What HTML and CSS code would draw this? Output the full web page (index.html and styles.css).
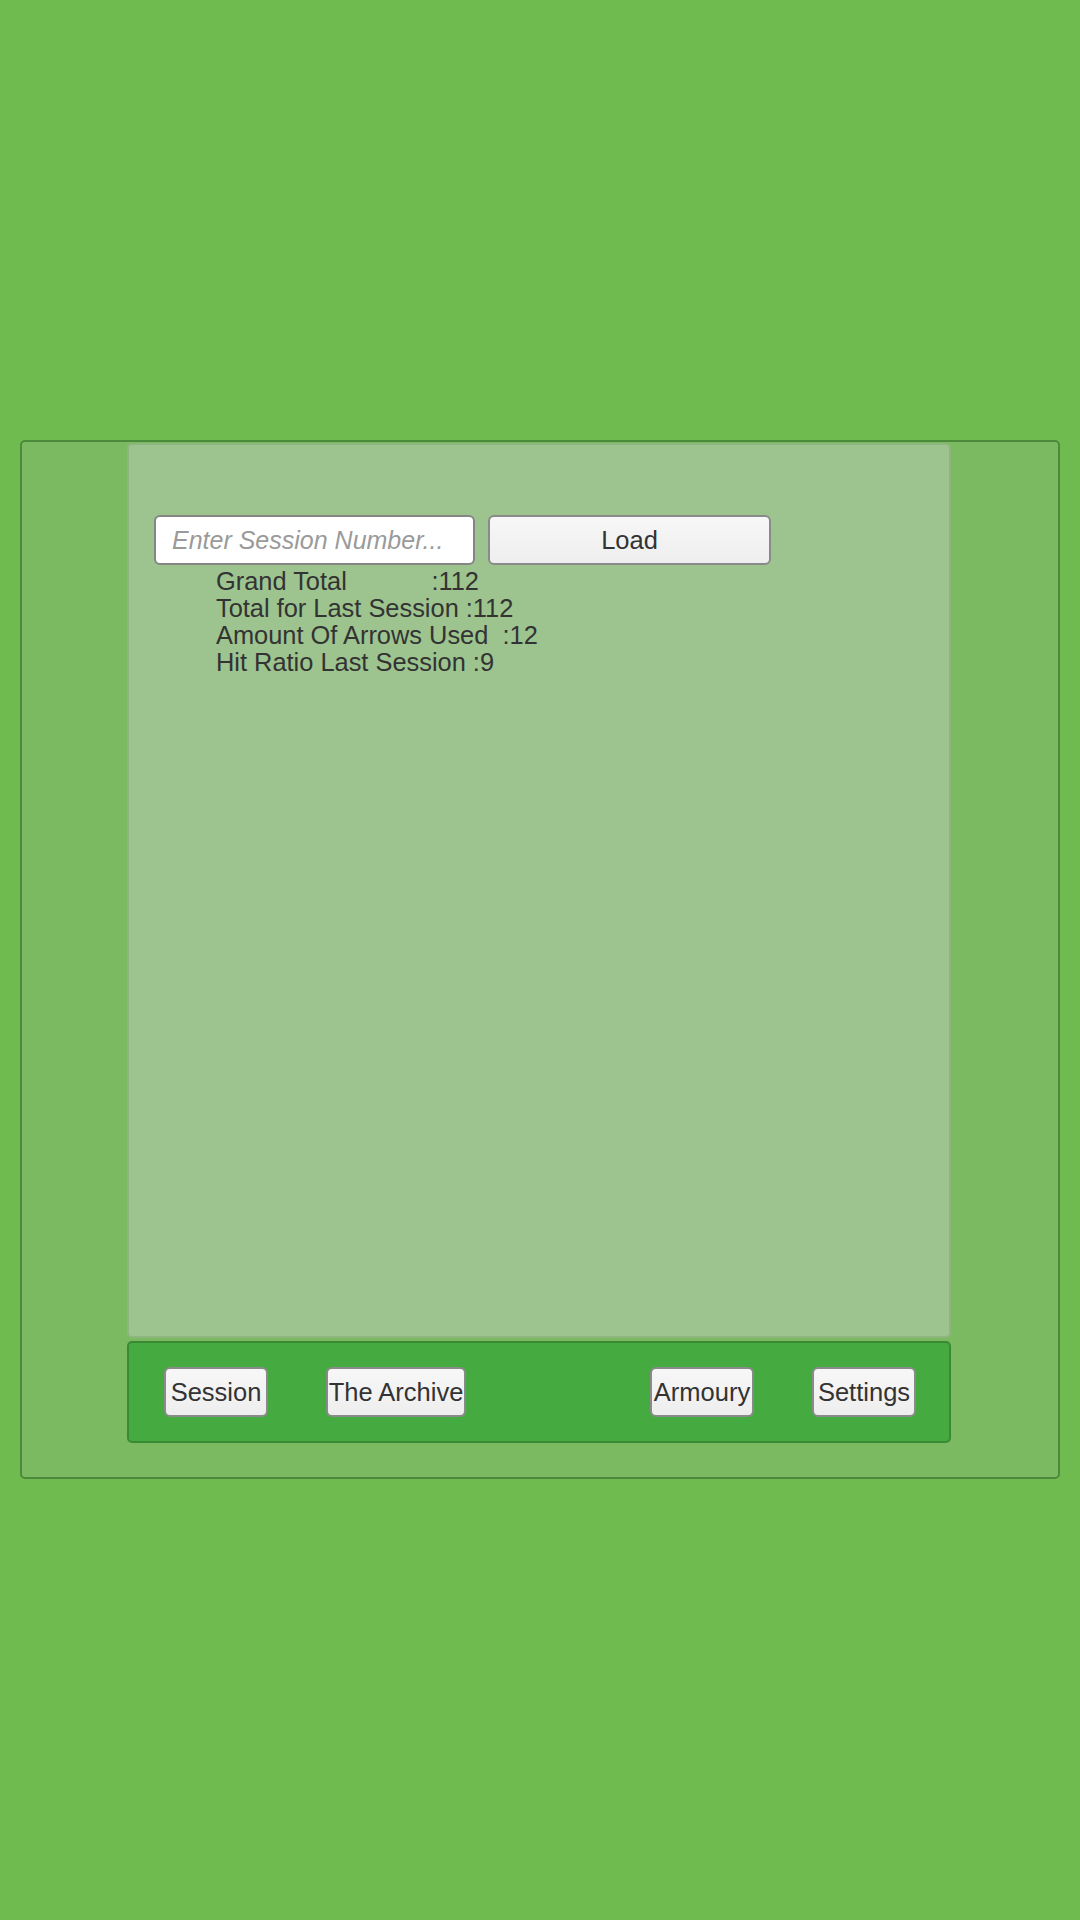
FILE: index.html
```html
<!DOCTYPE html>
<html>
<head>
<meta charset="utf-8">
<link rel="stylesheet" href="styles.css">
</head>
<body>
<div class="screen">
  <div class="frame">
    <div class="panel">
      <div class="load-row">
        <input class="session-input" type="text" placeholder="Enter Session Number...">
        <button class="btn load-btn">Load</button>
      </div>
      <div class="stats">
        <div class="stat">Grand Total            :112</div>
        <div class="stat">Total for Last Session :112</div>
        <div class="stat">Amount Of Arrows Used  :12</div>
        <div class="stat">Hit Ratio Last Session :9</div>
      </div>
    </div>
    <div class="nav">
      <div class="nav-group">
        <button class="btn nav-btn">Session</button>
        <button class="btn nav-btn nav-btn-wide">The Archive</button>
      </div>
      <div class="nav-group">
        <button class="btn nav-btn">Armoury</button>
        <button class="btn nav-btn">Settings</button>
      </div>
    </div>
  </div>
</div>
</body>
</html>
```
FILE: styles.css
```css
html, body {
  margin: 0;
  padding: 0;
}
body {
  background: #6fbb4f;
  font-family: "Liberation Sans", Arial, sans-serif;
  color: #333333;
  width: 1080px;
  height: 1920px;
  overflow: hidden;
}
.screen {
  padding-top: 440px;
  padding-left: 20px;
}
.frame {
  box-sizing: border-box;
  width: 1040px;
  height: 1039px;
  background: #7bba60;
  border: 2px solid #4c8a3b;
  border-radius: 5px;
  padding: 1px 107px 34px 105px;
  display: flex;
  flex-direction: column;
  gap: 3px;
}
.panel {
  box-sizing: border-box;
  height: 895px;
  background: #9dc48f;
  border: 2px solid #8db67f;
  border-radius: 5px;
  padding: 70px 25px 0 25px;
}
.load-row {
  display: flex;
  gap: 13px;
}
.session-input {
  box-sizing: border-box;
  width: 321px;
  height: 50px;
  margin: 0;
  background: #ffffff;
  border: 2px solid #858585;
  border-radius: 6px;
  padding: 0 0 0 16px;
  font-family: "Liberation Sans", Arial, sans-serif;
  font-size: 25px;
  color: #333;
  outline: none;
}
.session-input::placeholder {
  color: #9a9a9a;
  font-style: italic;
}
.btn {
  box-sizing: border-box;
  margin: 0;
  padding: 0;
  background: linear-gradient(#f7f7f7, #eeeeee);
  border: 2px solid #8a8a8a;
  border-radius: 6px;
  font-family: "Liberation Sans", Arial, sans-serif;
  font-size: 25.5px;
  color: #333333;
  white-space: nowrap;
}
.load-btn {
  width: 283px;
  height: 50px;
}
.stats {
  padding-left: 62px;
  padding-top: 3px;
}
.stat {
  font-size: 25.4px;
  line-height: 27px;
  white-space: pre;
  color: #333333;
}
.nav {
  box-sizing: border-box;
  height: 102px;
  background: #45ab40;
  border: 2px solid #3a8a35;
  border-radius: 5px;
  padding: 0 33px 0 35px;
  display: flex;
  align-items: center;
  justify-content: space-between;
}
.nav-group {
  display: flex;
  gap: 58px;
}
.nav-btn {
  width: 104px;
  height: 50px;
}
.nav-btn-wide {
  width: 140px;
}
```
